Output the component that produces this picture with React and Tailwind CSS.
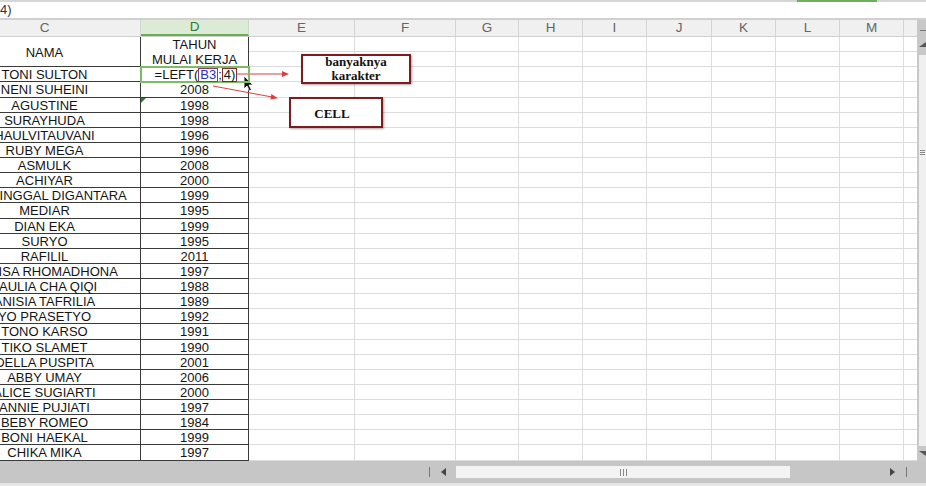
import React from 'react';

const names = [
  ['TONI SULTON', null],
  ['NENI SUHEINI', '2008'],
  ['AGUSTINE', '1998'],
  ['SURAYHUDA', '1998'],
  ['HAULVITAUVANI', '1996'],
  ['RUBY MEGA', '1996'],
  ['ASMULK', '2008'],
  ['ACHIYAR', '2000'],
  ['ANA TINGGAL DIGANTARA', '1999'],
  ['MEDIAR', '1995'],
  ['DIAN EKA', '1999'],
  ['SURYO', '1995'],
  ['RAFILIL', '2011'],
  ['ANNISA RHOMADHONA', '1997'],
  ['FAULIA CHA QIQI', '1988'],
  ['ANISIA TAFRILIA', '1989'],
  ['YO PRASETYO', '1992'],
  ['TONO KARSO', '1991'],
  ['TIKO SLAMET', '1990'],
  ['DELLA PUSPITA', '2001'],
  ['ABBY UMAY', '2006'],
  ['ALICE SUGIARTI', '2000'],
  ['ANNIE PUJIATI', '1997'],
  ['BEBY ROMEO', '1984'],
  ['BONI HAEKAL', '1999'],
  ['CHIKA MIKA', '1997'],
];

// empty columns E..N
const rest = [
  ['E', 'w-[106px]'],
  ['F', 'w-[101px]'],
  ['G', 'w-[63px]'],
  ['H', 'w-[64px]'],
  ['I', 'w-[64px]'],
  ['J', 'w-[65px]'],
  ['K', 'w-[64px]'],
  ['L', 'w-[64px]'],
  ['M', 'w-[64px]'],
  ['', 'w-[20px]'],
];

function EmptyCells() {
  return (
    <>
      {rest.map(([k, w]) => (
        <div key={k} className={`${w} shrink-0 h-full border-r border-b border-[#dcdcdc]`} />
      ))}
    </>
  );
}

function Formula() {
  return (
    <span className="relative z-10 inline-flex items-center pl-[3px]">
      =LEFT(
      <span className="border border-[#8b3f6e] text-[#2c2cc8] px-[1px] leading-[12px]">B3</span>
      ;
      <span className="border border-[#8b2a2a] px-[1px] leading-[12px]">4)</span>
    </span>
  );
}

export default function App() {
  return (
    <div className="relative w-[926px] h-[486px] overflow-hidden bg-white flex flex-col text-[13px] text-[#141414]" style={{ fontFamily: '"Liberation Sans", Arial, sans-serif' }}>
      {/* formula bar */}
      <div className="h-[20px] shrink-0 flex flex-col">
        <div className="h-[2px] bg-[#d6d6d6] flex">
          <div className="ml-[797px] w-[80px] h-[2px] bg-[#6fae5f]" />
        </div>
        <div className="h-[16px] flex items-center text-[#333]">4)</div>
        <div className="h-[2px] bg-[#d0d0d0]" />
      </div>

      <div className="flex h-[441px] shrink-0">
        {/* sheet */}
        <div className="w-[917px] overflow-hidden">
          <div className="ml-[-51px] w-[968px] flex flex-col">
            {/* column headers */}
            <div className="flex h-[17px] bg-[#f0f0f0] text-[#666] text-[13.5px] border-b border-[#cfcfcf]">
              <div className="w-[192px] shrink-0 flex items-center justify-center border-r border-[#d4d4d4]">C</div>
              <div className="w-[108px] shrink-0 flex items-center justify-center bg-[#dcebd6] text-[#2f7a3a] border-b-2 border-[#6aab55] border-r border-r-[#c9d9c4]">D</div>
              {rest.map(([k, w]) => (
                <div key={k} className={`${w} shrink-0 flex items-center justify-center border-r border-[#d4d4d4]`}>{k}</div>
              ))}
            </div>

            {/* merged title row */}
            <div className="flex h-[30.28px]">
              <div className="w-[192px] shrink-0 flex items-center justify-center border-r border-b border-[#3a3a3a] pt-[2px]">NAMA</div>
              <div className="w-[108px] shrink-0 flex flex-col items-center justify-center leading-[15px] pt-[1px] border-r border-b border-[#3a3a3a]">
                <span>TAHUN</span>
                <span>MULAI KERJA</span>
              </div>
              <div className="flex flex-col">
                <div className="flex h-[15.14px]"><EmptyCells /></div>
                <div className="flex h-[15.14px]"><EmptyCells /></div>
              </div>
            </div>

            {names.map(([n, y], i) => (
              <div key={n} className="flex h-[15.14px]">
                <div className="w-[192px] shrink-0 flex items-center justify-center whitespace-nowrap border-r border-b border-[#3a3a3a] leading-none pt-[1px]">{n}</div>
                <div className={`relative w-[108px] shrink-0 flex items-center justify-center border-r border-b border-[#3a3a3a] leading-none pt-[1px] ${i === 0 ? 'outline-2 outline-[#7fbb66] -outline-offset-1 z-10' : ''}`}>
                  {i === 0 ? <Formula /> : y}
                  {i === 2 && (
                    <span className="absolute left-0 top-0 w-0 h-0 border-t-[5px] border-r-[5px] border-t-[#2e7d32] border-r-transparent" />
                  )}
                </div>
                <EmptyCells />
              </div>
            ))}
          </div>
        </div>

        {/* vertical scrollbar */}
        <div className="w-[9px] shrink-0 bg-[#c8c8c8] flex flex-col pl-[2px]">
          <div className="h-[35px] flex flex-col items-center">
            <div className="mt-[10px] w-[6px] h-[1px] bg-[#777]" />
            <svg width="7" height="5" viewBox="0 0 7 5" className="mt-[11px]"><path d="M0 5 L7 5 L7 0 Z" fill="#555" /></svg>
          </div>
          <div className="flex-1 bg-[#f0f0f0] flex flex-col items-start">
            <div className="mt-[95px] ml-[1px] flex flex-col gap-[1px]">
              <div className="w-[5px] h-[1px] bg-[#888]" />
              <div className="w-[5px] h-[1px] bg-[#888]" />
              <div className="w-[5px] h-[1px] bg-[#888]" />
            </div>
          </div>
          <div className="h-[15px] flex items-center justify-center">
            <svg width="7" height="5" viewBox="0 0 7 5"><path d="M0 0 L7 0 L7 5 Z" fill="#555" /></svg>
          </div>
        </div>
      </div>

      {/* horizontal scrollbar */}
      <div className="h-[22px] shrink-0 bg-[#c6c6c6] flex items-center">
        <div className="ml-[429px] w-[1px] h-[10px] bg-[#777]" />
        <svg width="5" height="8" viewBox="0 0 5 8" className="ml-[11px]"><path d="M5 0 L0 4 L5 8 Z" fill="#444" /></svg>
        <div className="ml-[10px] w-[334px] h-[12px] bg-[#f3f3f3] flex items-center justify-center gap-[2px]">
          <div className="w-[1px] h-[7px] bg-[#888]" />
          <div className="w-[1px] h-[7px] bg-[#888]" />
          <div className="w-[1px] h-[7px] bg-[#888]" />
        </div>
        <svg width="5" height="8" viewBox="0 0 5 8" className="ml-[100px]"><path d="M0 0 L5 4 L0 8 Z" fill="#444" /></svg>
        <div className="ml-[11px] w-[1px] h-[10px] bg-[#777]" />
      </div>
      <div className="h-[3px] shrink-0 bg-[#e6e6e6]" />

      {/* annotations */}
      <div className="absolute left-[301px] top-[54px] w-[110px] h-[30px] border-2 border-[#801a1e] bg-white shadow-[1px_1px_2px_rgba(0,0,0,0.35)] flex flex-col items-center justify-center text-[13px] font-bold leading-[14px] text-[#111]" style={{ fontFamily: '"Liberation Serif", "Times New Roman", serif' }}>
        <span>banyaknya</span>
        <span>karakter</span>
      </div>
      <div className="absolute left-[289px] top-[97px] w-[94px] h-[31px] border-2 border-[#801a1e] bg-white shadow-[1px_1px_2px_rgba(0,0,0,0.35)] flex items-center justify-center pr-[8px] pt-[2px] text-[13px] font-bold text-[#111]" style={{ fontFamily: '"Liberation Serif", "Times New Roman", serif' }}>
        CELL
      </div>

      <svg className="absolute left-0 top-0 pointer-events-none" width="926" height="486">
        <line x1="236" y1="74" x2="283" y2="74" stroke="#d8413f" strokeWidth="1" />
        <path d="M289 74 L282 71 L282 77 Z" fill="#d8413f" />
        <line x1="213" y1="86" x2="272" y2="97" stroke="#d8413f" strokeWidth="1" />
        <path d="M278 98.2 L271.4 94 L270.4 99.6 Z" fill="#d8413f" />
        <path d="M244 76 L244 89 L247 86 L249.5 91 L251.5 90 L249 85 L253 85 Z" fill="#111" stroke="#fff" strokeWidth="0.8" />
      </svg>
    </div>
  );
}
